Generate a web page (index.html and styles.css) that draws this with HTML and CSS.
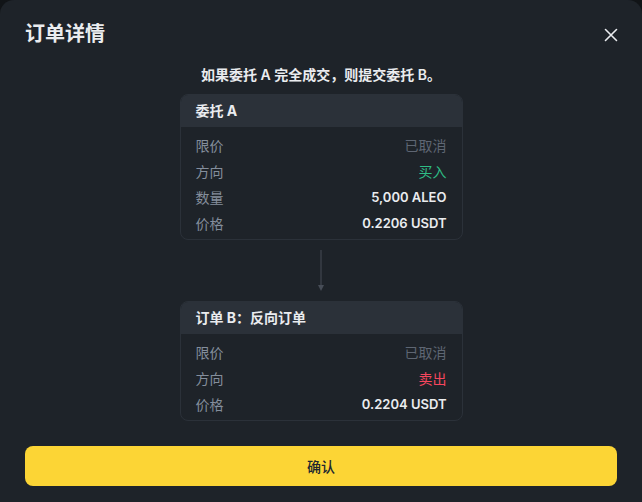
FILE: index.html
```html
<!DOCTYPE html>
<html lang="zh">
<head>
<meta charset="utf-8">
<link rel="stylesheet" href="styles.css">
</head>
<body>
<div class="modal">
  <div class="modal-head">
    <h1 class="title">订单详情</h1>
    <button class="close" aria-label="close">
      <svg width="14" height="14" viewBox="0 0 14 14"><path d="M1.5 1.5L12.5 12.5M12.5 1.5L1.5 12.5" stroke="#eaecef" stroke-width="1.6" stroke-linecap="round"/></svg>
    </button>
  </div>
  <div class="modal-body">
    <p class="desc">如果委托 A 完全成交，则提交委托 B。</p>
    <div class="card">
      <div class="card-head">委托 A</div>
      <div class="card-rows">
        <div class="row"><span class="label">限价</span><span class="val muted">已取消</span></div>
        <div class="row"><span class="label">方向</span><span class="val buy">买入</span></div>
        <div class="row"><span class="label">数量</span><span class="val strong">5,000 ALEO</span></div>
        <div class="row"><span class="label">价格</span><span class="val strong">0.2206 USDT</span></div>
      </div>
    </div>
    <div class="connector">
      <svg width="10" height="42" viewBox="0 0 10 42"><path d="M5 0V36" stroke="#474d57" stroke-width="1"/><path d="M2 35L5 41L8 35Z" fill="#474d57"/></svg>
    </div>
    <div class="card">
      <div class="card-head">订单 B：反向订单</div>
      <div class="card-rows">
        <div class="row"><span class="label">限价</span><span class="val muted">已取消</span></div>
        <div class="row"><span class="label">方向</span><span class="val sell">卖出</span></div>
        <div class="row"><span class="label">价格</span><span class="val strong">0.2204 USDT</span></div>
      </div>
    </div>
  </div>
  <div class="modal-foot">
    <button class="confirm">确认</button>
  </div>
</div>
</body>
</html>
```

FILE: styles.css
```css
* { box-sizing: border-box; }
html, body { margin: 0; padding: 0; }
body {
  background: #111417;
  width: 642px;
  height: 502px;
  overflow: hidden;
  font-family: "Inter", "Noto Sans CJK SC", sans-serif;
  color: #eaecef;
}
.modal {
  width: 642px;
  height: 502px;
  background: #1e2329;
  border-radius: 14px 14px 0 0;
  display: flex;
  flex-direction: column;
}
.modal-head {
  display: flex;
  align-items: center;
  justify-content: space-between;
  padding: 20px 24px 0 25px;
  height: 48px;
}
.title {
  margin: 0;
  font-size: 20px;
  line-height: 28px;
  font-weight: 700;
  color: #eaecef;
}
.close {
  background: none;
  border: 0;
  padding: 0;
  width: 14px;
  height: 14px;
  display: flex;
  margin-top: 2px;
}
.modal-body {
  display: flex;
  flex-direction: column;
  align-items: center;
  padding-top: 17px;
}
.desc {
  margin: 0 0 9px;
  font-size: 14px;
  line-height: 20px;
  font-weight: 600;
  color: #eaecef;
}
.card {
  width: 283px;
  border: 1px solid #2b3139;
  border-radius: 8px;
  overflow: hidden;
}
.card-head {
  background: #2b3139;
  height: 32px;
  line-height: 32px;
  padding: 0 15px;
  font-size: 14px;
  font-weight: 700;
  color: #eaecef;
}
.card-rows {
  padding: 5px 15px 3px;
}
.row {
  display: flex;
  justify-content: space-between;
  align-items: center;
  height: 26px;
  font-size: 14px;
}
.label { color: #848e9c; }
.val.muted { color: #5e6673; }
.val.buy { color: #2ebd85; }
.val.sell { color: #f6465d; }
.val.strong { color: #eaecef; font-weight: 600; font-size: 13px; }
.connector {
  height: 61px;
  display: flex;
  align-items: center;
  justify-content: center;
  padding-top: 10px;
  padding-bottom: 9px;
}
.modal-foot {
  padding: 25px 25px 0 25px;
}
.confirm {
  width: 100%;
  height: 40px;
  border: 0;
  border-radius: 8px;
  background: #fcd535;
  color: #202630;
  font-family: "Inter", "Noto Sans CJK SC", sans-serif;
  font-size: 14px;
  font-weight: 500;
}
```
